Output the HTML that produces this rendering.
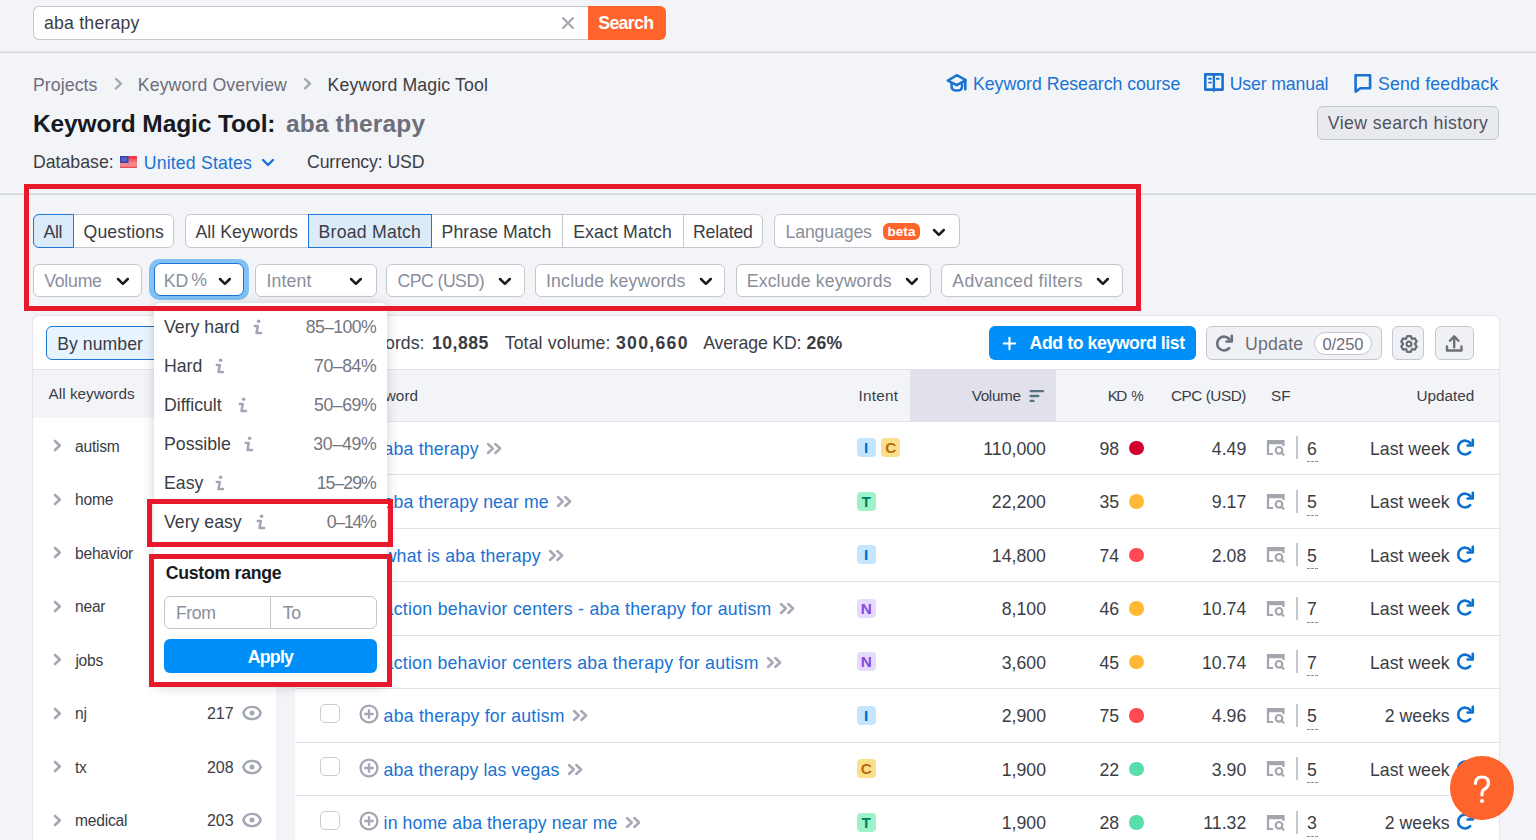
<!DOCTYPE html>
<html><head><meta charset="utf-8"><style>
html,body{margin:0;padding:0;}
body{width:1536px;height:840px;overflow:hidden;position:relative;background:#f3f4f8;font-family:"Liberation Sans",sans-serif;}
.a{position:absolute;}
.t{position:absolute;white-space:nowrap;line-height:1;}
</style></head><body>
<div class="a" style="left:33px;top:6px;width:555px;height:34px;background:#fff;border:1px solid #c4c7cf;border-right:none;border-radius:6px 0 0 6px;box-sizing:border-box;"></div>
<span class="t" style="left:44.00px;top:15.16px;font-size:17.7px;color:#3b3d45;letter-spacing:0.201px;">aba therapy</span>
<svg class="a" style="left:561px;top:16px;" width="14" height="14" viewBox="0 0 14 14"><path d="M2 2 L12 12 M12 2 L2 12" stroke="#a3a6ae" stroke-width="2" stroke-linecap="round"/></svg>
<div class="a" style="left:588px;top:6px;width:78px;height:34px;background:#ff642d;border-radius:0 6px 6px 0;"></div>
<span class="t" style="left:598.30px;top:15.16px;font-size:17.7px;color:#fff;font-weight:700;letter-spacing:-0.666px;">Search</span>
<div class="a" style="left:0px;top:51px;width:1536px;height:1px;background:#e4e5ea;"></div>
<div class="a" style="left:0px;top:52px;width:1536px;height:1px;background:#d4d6dc;"></div>
<span class="t" style="left:33.00px;top:77.16px;font-size:17.7px;color:#6c6e79;letter-spacing:0.067px;">Projects</span>
<svg class="a" style="left:113.409px;top:76.1px;" width="10.982" height="15.4" viewBox="0 0 10.982 15.4"><path d="M3 3 L7.982 7.7 L3 12.4" fill="none" stroke="#a3a6b3" stroke-width="2.4" stroke-linecap="round" stroke-linejoin="round"/></svg>
<span class="t" style="left:137.80px;top:77.16px;font-size:17.7px;color:#6c6e79;letter-spacing:0.107px;">Keyword Overview</span>
<svg class="a" style="left:302.209px;top:76.1px;" width="10.982" height="15.4" viewBox="0 0 10.982 15.4"><path d="M3 3 L7.982 7.7 L3 12.4" fill="none" stroke="#a3a6b3" stroke-width="2.4" stroke-linecap="round" stroke-linejoin="round"/></svg>
<span class="t" style="left:327.60px;top:77.16px;font-size:17.7px;color:#3b3d45;letter-spacing:0.138px;">Keyword Magic Tool</span>
<span class="t" style="left:973.00px;top:76.16px;font-size:17.7px;color:#1a72d2;letter-spacing:-0.008px;">Keyword Research course</span>
<span class="t" style="left:1229.70px;top:76.16px;font-size:17.7px;color:#1a72d2;letter-spacing:-0.144px;">User manual</span>
<span class="t" style="left:1378.00px;top:76.16px;font-size:17.7px;color:#1a72d2;letter-spacing:0.198px;">Send feedback</span>
<svg class="a" style="left:946px;top:73px;" width="22" height="20" viewBox="0 0 22 20"><path d="M1.8 7.6 L10.8 2.2 L19.8 7.2 L10.8 12.2 Z" fill="none" stroke="#1a72d2" stroke-width="2.5" stroke-linejoin="round"/><path d="M5.6 10.2 V13.8 Q5.6 17.6 10.8 17.6 Q16 17.6 16 13.8 V10.2" fill="none" stroke="#1a72d2" stroke-width="2.5"/><path d="M19.3 7.4 V16.3" stroke="#1a72d2" stroke-width="2.6" stroke-linecap="round"/></svg>
<svg class="a" style="left:1203px;top:72px;" width="22" height="22" viewBox="0 0 22 22"><path d="M2.3 2.4 H19.6 V17.6 H2.3 Z" fill="none" stroke="#1a72d2" stroke-width="2.6" stroke-linejoin="round"/><path d="M10.9 2.5 V18" stroke="#1a72d2" stroke-width="2.4"/><path d="M9.2 18 L10.9 20.6 L12.6 18 Z" fill="#1a72d2"/><path d="M6 6.8 H8 M6 10.6 H8 M13.8 6.8 H15.8" stroke="#1a72d2" stroke-width="1.9" stroke-linecap="round"/></svg>
<svg class="a" style="left:1353px;top:72px;" width="20" height="22" viewBox="0 0 20 22"><path d="M2.6 3.3 H17.1 V16.2 H7.4 L2.6 19.6 Z" fill="none" stroke="#1a72d2" stroke-width="2.6" stroke-linejoin="round"/></svg>
<div class="a" style="left:1317px;top:106px;width:181.5px;height:33.7px;background:#e9eaef;border:1px solid #c4c7cf;border-radius:6px;box-sizing:border-box;"></div>
<span class="t" style="left:1327.80px;top:115.16px;font-size:17.7px;color:#50535b;letter-spacing:0.392px;">View search history</span>
<span class="t" style="left:33.00px;top:112.26px;font-size:24.5px;color:#171a22;font-weight:700;letter-spacing:-0.114px;">Keyword Magic Tool:</span>
<span class="t" style="left:286.00px;top:112.26px;font-size:24.5px;color:#6c6e79;font-weight:700;letter-spacing:0.148px;">aba therapy</span>
<span class="t" style="left:33.00px;top:154.16px;font-size:17.7px;color:#3b3d45;">Database:</span>
<svg class="a" style="left:119.8px;top:155.7px;" width="17.2" height="12.8" viewBox="0 0 17.2 12.8"><rect x="0" y="0" width="17.2" height="12.8" rx="0.8" fill="#f2878b"/><rect x="0" y="0" width="17.2" height="3" fill="#f23c4c"/><rect x="0" y="3" width="17.2" height="2.5" fill="#f26068"/><rect x="0" y="10.8" width="17.2" height="2" fill="#e2505e"/><rect x="0" y="0" width="8.5" height="7" fill="#3a44a8"/><rect x="1.5" y="1.5" width="5.5" height="4" fill="#5a64c0"/></svg>
<span class="t" style="left:143.70px;top:155.16px;font-size:17.7px;color:#1a72d2;letter-spacing:0.171px;">United States</span>
<svg class="a" style="left:259.8px;top:157.05px;" width="16" height="10.9" viewBox="0 0 16 10.9"><path d="M3 3 L8.0 7.9 L13 3" fill="none" stroke="#1a72d2" stroke-width="2.4" stroke-linecap="round" stroke-linejoin="round"/></svg>
<span class="t" style="left:307.00px;top:154.16px;font-size:17.7px;color:#3b3d45;letter-spacing:-0.118px;">Currency: USD</span>
<div class="a" style="left:0px;top:193px;width:1536px;height:1px;background:#e2e4e9;"></div>
<div class="a" style="left:0px;top:194px;width:1536px;height:1px;background:#d1d4db;"></div>
<div class="a" style="left:33px;top:214.3px;width:141.4px;height:33.6px;background:#fff;border:1px solid #c4c7cf;border-radius:6px;box-sizing:border-box;"></div>
<div class="a" style="left:33px;top:214.3px;width:40.5px;height:33.6px;background:#dcebfa;border:1px solid #1f78d4;border-radius:6px 0 0 6px;box-sizing:border-box;"></div>
<span class="t" style="left:43.50px;top:224.16px;font-size:17.7px;color:#3b3d45;letter-spacing:-0.382px;">All</span>
<span class="t" style="left:83.60px;top:224.16px;font-size:17.7px;color:#3b3d45;letter-spacing:0.089px;">Questions</span>
<div class="a" style="left:185px;top:214.3px;width:578px;height:33.6px;background:#fff;border:1px solid #c4c7cf;border-radius:6px;box-sizing:border-box;"></div>
<div class="a" style="left:308px;top:214.3px;width:123.6px;height:33.6px;background:#dcebfa;border:1px solid #1f78d4;box-sizing:border-box;"></div>
<div class="a" style="left:562px;top:215.3px;width:1px;height:31.6px;background:#c4c7cf;"></div>
<div class="a" style="left:682.6px;top:215.3px;width:1px;height:31.6px;background:#c4c7cf;"></div>
<span class="t" style="left:195.50px;top:224.16px;font-size:17.7px;color:#3b3d45;letter-spacing:0.018px;">All Keywords</span>
<span class="t" style="left:318.60px;top:224.16px;font-size:17.7px;color:#3b3d45;letter-spacing:0.206px;">Broad Match</span>
<span class="t" style="left:441.60px;top:224.16px;font-size:17.7px;color:#3b3d45;letter-spacing:0.055px;">Phrase Match</span>
<span class="t" style="left:573.20px;top:224.16px;font-size:17.7px;color:#3b3d45;letter-spacing:0.131px;">Exact Match</span>
<span class="t" style="left:693.00px;top:224.16px;font-size:17.7px;color:#3b3d45;letter-spacing:-0.169px;">Related</span>
<div class="a" style="left:774.4px;top:214.3px;width:185.2px;height:33.6px;background:#fff;border:1px solid #c4c7cf;border-radius:6px;box-sizing:border-box;"></div>
<span class="t" style="left:785.50px;top:224.16px;font-size:17.7px;color:#8a8e9b;letter-spacing:-0.137px;">Languages</span>
<div class="a" style="left:883px;top:223.4px;width:37px;height:17px;background:#ff642d;border-radius:6px;"></div>
<span class="t" style="left:887.50px;top:224.76px;font-size:13.5px;color:#fff;font-weight:700;letter-spacing:0.050px;">beta</span>
<svg class="a" style="left:931.3000000000001px;top:226.599px;" width="15.8" height="10.802" viewBox="0 0 15.8 10.802"><path d="M3 3 L7.9 7.8020000000000005 L12.8 3" fill="none" stroke="#171a22" stroke-width="2.5" stroke-linecap="round" stroke-linejoin="round"/></svg>
<div class="a" style="left:33px;top:263.5px;width:109.19999999999999px;height:33px;background:#fff;border:1px solid #c4c7cf;border-radius:6px;box-sizing:border-box;"></div>
<span class="t" style="left:44.20px;top:273.16px;font-size:17.7px;color:#8a8e9b;letter-spacing:-0.246px;">Volume</span>
<svg class="a" style="left:114.89999999999999px;top:275.799px;" width="15.8" height="10.802" viewBox="0 0 15.8 10.802"><path d="M3 3 L7.9 7.8020000000000005 L12.8 3" fill="none" stroke="#171a22" stroke-width="2.5" stroke-linecap="round" stroke-linejoin="round"/></svg>
<div class="a" style="left:149.2px;top:258.9px;width:99.4px;height:41.4px;background:#80c2f6;border-radius:10px;"></div>
<div class="a" style="left:153.7px;top:262.8px;width:90.6px;height:33.6px;background:#fff;border:1.5px solid #1b74d6;border-radius:7px;box-sizing:border-box;"></div>
<span class="t" style="left:163.80px;top:273.16px;font-size:17.7px;color:#8a8e9b;">KD</span>
<span class="t" style="left:191.30px;top:272.16px;font-size:17.7px;color:#8a8e9b;">%</span>
<svg class="a" style="left:217.29999999999998px;top:275.799px;" width="15.8" height="10.802" viewBox="0 0 15.8 10.802"><path d="M3 3 L7.9 7.8020000000000005 L12.8 3" fill="none" stroke="#171a22" stroke-width="2.5" stroke-linecap="round" stroke-linejoin="round"/></svg>
<div class="a" style="left:255px;top:263.5px;width:121.5px;height:33px;background:#fff;border:1px solid #c4c7cf;border-radius:6px;box-sizing:border-box;"></div>
<span class="t" style="left:266.50px;top:273.16px;font-size:17.7px;color:#8a8e9b;letter-spacing:0.123px;">Intent</span>
<svg class="a" style="left:348.3px;top:275.799px;" width="15.8" height="10.802" viewBox="0 0 15.8 10.802"><path d="M3 3 L7.9 7.8020000000000005 L12.8 3" fill="none" stroke="#171a22" stroke-width="2.5" stroke-linecap="round" stroke-linejoin="round"/></svg>
<div class="a" style="left:386.3px;top:263.5px;width:139.09999999999997px;height:33px;background:#fff;border:1px solid #c4c7cf;border-radius:6px;box-sizing:border-box;"></div>
<span class="t" style="left:397.40px;top:273.16px;font-size:17.7px;color:#8a8e9b;letter-spacing:-0.532px;">CPC (USD)</span>
<svg class="a" style="left:497.1px;top:275.799px;" width="15.8" height="10.802" viewBox="0 0 15.8 10.802"><path d="M3 3 L7.9 7.8020000000000005 L12.8 3" fill="none" stroke="#171a22" stroke-width="2.5" stroke-linecap="round" stroke-linejoin="round"/></svg>
<div class="a" style="left:535px;top:263.5px;width:190.29999999999995px;height:33px;background:#fff;border:1px solid #c4c7cf;border-radius:6px;box-sizing:border-box;"></div>
<span class="t" style="left:546.00px;top:273.16px;font-size:17.7px;color:#8a8e9b;letter-spacing:0.183px;">Include keywords</span>
<svg class="a" style="left:697.7px;top:275.799px;" width="15.8" height="10.802" viewBox="0 0 15.8 10.802"><path d="M3 3 L7.9 7.8020000000000005 L12.8 3" fill="none" stroke="#171a22" stroke-width="2.5" stroke-linecap="round" stroke-linejoin="round"/></svg>
<div class="a" style="left:736.3px;top:263.5px;width:195.0px;height:33px;background:#fff;border:1px solid #c4c7cf;border-radius:6px;box-sizing:border-box;"></div>
<span class="t" style="left:746.70px;top:273.16px;font-size:17.7px;color:#8a8e9b;letter-spacing:0.150px;">Exclude keywords</span>
<svg class="a" style="left:903.6px;top:275.799px;" width="15.8" height="10.802" viewBox="0 0 15.8 10.802"><path d="M3 3 L7.9 7.8020000000000005 L12.8 3" fill="none" stroke="#171a22" stroke-width="2.5" stroke-linecap="round" stroke-linejoin="round"/></svg>
<div class="a" style="left:941.4px;top:263.5px;width:181.30000000000007px;height:33px;background:#fff;border:1px solid #c4c7cf;border-radius:6px;box-sizing:border-box;"></div>
<span class="t" style="left:952.30px;top:273.16px;font-size:17.7px;color:#8a8e9b;letter-spacing:0.291px;">Advanced filters</span>
<svg class="a" style="left:1094.8999999999999px;top:275.799px;" width="15.8" height="10.802" viewBox="0 0 15.8 10.802"><path d="M3 3 L7.9 7.8020000000000005 L12.8 3" fill="none" stroke="#171a22" stroke-width="2.5" stroke-linecap="round" stroke-linejoin="round"/></svg>
<div class="a" style="left:33px;top:316px;width:1466px;height:600px;background:#fff;border-radius:6px 6px 0 0;box-shadow:0 0 0 1px #e6e7ec;"></div>
<div class="a" style="left:33px;top:369px;width:1466px;height:1px;background:#e0e1e9;"></div>
<div class="a" style="left:46px;top:326px;width:200px;height:34px;background:#e7f3fe;border:1px solid #1f78d4;border-radius:6px;box-sizing:border-box;"></div>
<span class="t" style="left:57.20px;top:336.16px;font-size:17.7px;color:#3b3d45;letter-spacing:0.028px;">By number</span>
<span class="t" style="left:320.23px;top:335.16px;font-size:17.7px;color:#3b3d45;">All keywords:</span>
<span class="t" style="left:432.00px;top:335.16px;font-size:17.7px;color:#3b3d45;font-weight:700;letter-spacing:0.451px;">10,885</span>
<span class="t" style="left:504.70px;top:335.16px;font-size:17.7px;color:#3b3d45;letter-spacing:0.126px;">Total volume:</span>
<span class="t" style="left:616.00px;top:335.16px;font-size:17.7px;color:#3b3d45;font-weight:700;letter-spacing:1.269px;">300,660</span>
<span class="t" style="left:703.20px;top:335.16px;font-size:17.7px;color:#3b3d45;letter-spacing:-0.172px;">Average KD:</span>
<span class="t" style="left:806.40px;top:335.16px;font-size:17.7px;color:#3b3d45;font-weight:700;letter-spacing:0.191px;">26%</span>
<div class="a" style="left:989px;top:326.3px;width:207px;height:33.3px;background:#008ff8;border-radius:6px;"></div>
<svg class="a" style="left:1001.7px;top:335.5px;" width="15" height="15" viewBox="0 0 15 15"><path d="M7.5 1.8 V13.2 M1.8 7.5 H13.2" stroke="#fff" stroke-width="2.2" stroke-linecap="round"/></svg>
<span class="t" style="left:1029.60px;top:335.16px;font-size:17.7px;color:#fff;font-weight:700;letter-spacing:-0.425px;">Add to keyword list</span>
<div class="a" style="left:1206.2px;top:326.3px;width:175.5px;height:33.3px;background:#f0f1f5;border:1px solid #c4c7cf;border-radius:6px;box-sizing:border-box;"></div>
<svg class="a" style="left:1214px;top:333.8px;" width="20" height="20" viewBox="0 0 20 20"><path d="M15.2 14.2 A6.9 6.9 0 1 1 15.6 5.4" fill="none" stroke="#6c6e79" stroke-width="2.6" stroke-linecap="round"/><path d="M17.8 1.8 V7.5 H12.6" fill="none" stroke="#6c6e79" stroke-width="2.6" stroke-linecap="round" stroke-linejoin="round"/></svg>
<span class="t" style="left:1245.00px;top:336.16px;font-size:17.7px;color:#6c6e79;letter-spacing:0.223px;">Update</span>
<div class="a" style="left:1314px;top:331.5px;width:58px;height:23px;background:#fff;border:1px solid #c4c7cf;border-radius:12px;box-sizing:border-box;"></div>
<span class="t" style="left:1322.50px;top:335.76px;font-size:16.5px;color:#6c6e79;letter-spacing:-0.071px;">0/250</span>
<div class="a" style="left:1392px;top:326.3px;width:32.4px;height:33.3px;background:#f0f1f5;border:1px solid #c4c7cf;border-radius:6px;box-sizing:border-box;"></div>
<svg class="a" style="left:1398.5px;top:333.8px;" width="20" height="20" viewBox="0 0 20 20"><path d="M7.18 4.70 L8.18 2.11 L11.82 2.11 L12.82 4.70 L13.18 4.91 L15.92 4.48 L17.75 7.63 L16.00 9.79 L16.00 10.21 L17.75 12.37 L15.92 15.52 L13.18 15.09 L12.82 15.30 L11.82 17.89 L8.18 17.89 L7.18 15.30 L6.82 15.09 L4.08 15.52 L2.25 12.37 L4.00 10.21 L4.00 9.79 L2.25 7.63 L4.08 4.48 L6.82 4.91 Z" fill="none" stroke="#6c6e79" stroke-width="2.3" stroke-linejoin="round"/><circle cx="10" cy="10" r="2.4" fill="none" stroke="#6c6e79" stroke-width="2.2"/></svg>
<div class="a" style="left:1435px;top:326.3px;width:39.4px;height:33.3px;background:#f0f1f5;border:1px solid #c4c7cf;border-radius:6px;box-sizing:border-box;"></div>
<svg class="a" style="left:1444px;top:333px;" width="20" height="20" viewBox="0 0 20 20"><path d="M10.2 14.3 V3.5 M6 7.8 L10.2 3.3 L14.4 7.8" fill="none" stroke="#6c6e79" stroke-width="2.4" stroke-linecap="round" stroke-linejoin="round"/><path d="M3 13.5 V17.5 H17.5 V13.5" fill="none" stroke="#6c6e79" stroke-width="2.4" stroke-linecap="round" stroke-linejoin="round"/></svg>
<div class="a" style="left:33px;top:370px;width:243.4px;height:48px;background:#f3f4f8;"></div>
<span class="t" style="left:48.60px;top:385.86px;font-size:15.3px;color:#3b3d45;letter-spacing:0.011px;">All keywords</span>
<div class="a" style="left:276.4px;top:316px;width:19px;height:600px;background:#f3f4f8;"></div>
<svg class="a" style="left:52.015px;top:438.4px;" width="10.77" height="15" viewBox="0 0 10.77 15"><path d="M3 3 L7.7700000000000005 7.5 L3 12" fill="none" stroke="#a3a6b3" stroke-width="2.6" stroke-linecap="round" stroke-linejoin="round"/></svg>
<span class="t" style="left:75.00px;top:438.71px;font-size:15.6px;color:#3b3d45;letter-spacing:-0.220px;">autism</span>
<svg class="a" style="left:52.015px;top:491.9px;" width="10.77" height="15" viewBox="0 0 10.77 15"><path d="M3 3 L7.7700000000000005 7.5 L3 12" fill="none" stroke="#a3a6b3" stroke-width="2.6" stroke-linecap="round" stroke-linejoin="round"/></svg>
<span class="t" style="left:75.00px;top:491.71px;font-size:15.6px;color:#3b3d45;letter-spacing:-0.220px;">home</span>
<svg class="a" style="left:52.015px;top:545.4000000000001px;" width="10.77" height="15" viewBox="0 0 10.77 15"><path d="M3 3 L7.7700000000000005 7.5 L3 12" fill="none" stroke="#a3a6b3" stroke-width="2.6" stroke-linecap="round" stroke-linejoin="round"/></svg>
<span class="t" style="left:75.00px;top:545.71px;font-size:15.6px;color:#3b3d45;letter-spacing:-0.220px;">behavior</span>
<svg class="a" style="left:52.015px;top:598.9000000000001px;" width="10.77" height="15" viewBox="0 0 10.77 15"><path d="M3 3 L7.7700000000000005 7.5 L3 12" fill="none" stroke="#a3a6b3" stroke-width="2.6" stroke-linecap="round" stroke-linejoin="round"/></svg>
<span class="t" style="left:75.00px;top:598.71px;font-size:15.6px;color:#3b3d45;letter-spacing:-0.220px;">near</span>
<svg class="a" style="left:52.015px;top:652.4000000000001px;" width="10.77" height="15" viewBox="0 0 10.77 15"><path d="M3 3 L7.7700000000000005 7.5 L3 12" fill="none" stroke="#a3a6b3" stroke-width="2.6" stroke-linecap="round" stroke-linejoin="round"/></svg>
<span class="t" style="left:75.39px;top:652.71px;font-size:15.6px;color:#3b3d45;letter-spacing:-0.220px;">jobs</span>
<svg class="a" style="left:52.015px;top:705.9000000000001px;" width="10.77" height="15" viewBox="0 0 10.77 15"><path d="M3 3 L7.7700000000000005 7.5 L3 12" fill="none" stroke="#a3a6b3" stroke-width="2.6" stroke-linecap="round" stroke-linejoin="round"/></svg>
<span class="t" style="left:75.00px;top:705.71px;font-size:15.6px;color:#3b3d45;letter-spacing:-0.220px;">nj</span>
<span class="t" style="left:206.91px;top:705.51px;font-size:16px;color:#3b3d45;">217</span>
<svg class="a" style="left:241.1px;top:705.35px;" width="22" height="16" viewBox="0 0 22 16"><path d="M2.3 8 C5 -0.2 17 -0.2 19.7 8 C17 16.2 5 16.2 2.3 8 Z" fill="none" stroke="#a3a6b3" stroke-width="2.4" stroke-linejoin="round"/><circle cx="11" cy="8" r="2.5" fill="#a3a6b3"/></svg>
<svg class="a" style="left:52.015px;top:759.4000000000001px;" width="10.77" height="15" viewBox="0 0 10.77 15"><path d="M3 3 L7.7700000000000005 7.5 L3 12" fill="none" stroke="#a3a6b3" stroke-width="2.6" stroke-linecap="round" stroke-linejoin="round"/></svg>
<span class="t" style="left:75.00px;top:759.71px;font-size:15.6px;color:#3b3d45;letter-spacing:-0.220px;">tx</span>
<span class="t" style="left:206.91px;top:759.51px;font-size:16px;color:#3b3d45;">208</span>
<svg class="a" style="left:241.1px;top:758.85px;" width="22" height="16" viewBox="0 0 22 16"><path d="M2.3 8 C5 -0.2 17 -0.2 19.7 8 C17 16.2 5 16.2 2.3 8 Z" fill="none" stroke="#a3a6b3" stroke-width="2.4" stroke-linejoin="round"/><circle cx="11" cy="8" r="2.5" fill="#a3a6b3"/></svg>
<svg class="a" style="left:52.015px;top:812.9000000000001px;" width="10.77" height="15" viewBox="0 0 10.77 15"><path d="M3 3 L7.7700000000000005 7.5 L3 12" fill="none" stroke="#a3a6b3" stroke-width="2.6" stroke-linecap="round" stroke-linejoin="round"/></svg>
<span class="t" style="left:75.00px;top:812.71px;font-size:15.6px;color:#3b3d45;letter-spacing:-0.220px;">medical</span>
<span class="t" style="left:206.91px;top:812.51px;font-size:16px;color:#3b3d45;">203</span>
<svg class="a" style="left:241.1px;top:812.35px;" width="22" height="16" viewBox="0 0 22 16"><path d="M2.3 8 C5 -0.2 17 -0.2 19.7 8 C17 16.2 5 16.2 2.3 8 Z" fill="none" stroke="#a3a6b3" stroke-width="2.4" stroke-linejoin="round"/><circle cx="11" cy="8" r="2.5" fill="#a3a6b3"/></svg>
<div class="a" style="left:295.2px;top:370px;width:1203.8px;height:50.5px;background:#f3f4f8;"></div>
<div class="a" style="left:910.2px;top:370px;width:145.6px;height:50.5px;background:#e0e1ea;"></div>
<div class="a" style="left:295.2px;top:420.5px;width:1203.8px;height:1px;background:#e0e1e9;"></div>
<span class="t" style="left:358.47px;top:387.86px;font-size:15.3px;color:#3b3d45;">Keyword</span>
<span class="t" style="left:858.60px;top:387.86px;font-size:15.3px;color:#3b3d45;letter-spacing:0.204px;">Intent</span>
<span class="t" style="left:971.70px;top:387.86px;font-size:15.3px;color:#3b3d45;letter-spacing:-0.345px;">Volume</span>
<svg class="a" style="left:1028px;top:388px;" width="18" height="16" viewBox="0 0 18 16"><path d="M2.6 3.1 H15 M2.6 8 H10.3 M2.6 12.9 H5.5" stroke="#587280" stroke-width="2.3" stroke-linecap="round"/></svg>
<span class="t" style="left:1107.80px;top:387.86px;font-size:15.3px;color:#3b3d45;letter-spacing:-1.752px;">KD</span>
<span class="t" style="left:1131.15px;top:389.01px;font-size:14px;color:#3b3d45;">%</span>
<span class="t" style="left:1171.00px;top:387.86px;font-size:15.3px;color:#3b3d45;letter-spacing:-0.457px;">CPC (USD)</span>
<span class="t" style="left:1271.00px;top:387.86px;font-size:15.3px;color:#3b3d45;">SF</span>
<span class="t" style="left:1416.55px;top:387.86px;font-size:15.3px;color:#3b3d45;">Updated</span>
<div class="a" style="left:320.2px;top:436.0px;width:19.4px;height:19.2px;background:#fff;border:1.2px solid #c9ccd4;border-radius:5px;box-sizing:border-box;"></div>
<svg class="a" style="left:358.8px;top:436.8px;" width="20" height="20" viewBox="0 0 20 20"><circle cx="10" cy="10" r="8.4" fill="none" stroke="#a3a6b3" stroke-width="2.3"/><path d="M10 5.3 V14.7 M5.3 10 H14.7" stroke="#a3a6b3" stroke-width="2.3"/></svg>
<span class="t" style="left:383.60px;top:441.16px;font-size:17.7px;color:#1a72d2;letter-spacing:0.161px;">aba therapy</span>
<svg class="a" style="left:486.2px;top:441.5px;" width="17" height="15" viewBox="0 0 17 15"><path d="M2 2 L6.8 6.5 L2 11 M9.3 2 L14.1 6.5 L9.3 11" fill="none" stroke="#a6a9b5" stroke-width="2.5" stroke-linecap="round" stroke-linejoin="round"/></svg>
<div class="a" style="left:856.6px;top:438.2px;width:19.3px;height:19.1px;background:#c4e5fe;border-radius:4px;"></div>
<span class="t" style="left:864.12px;top:439.86px;font-size:15.3px;color:#006dca;font-weight:700;">I</span>
<div class="a" style="left:881.0px;top:438.2px;width:19.3px;height:19.1px;background:#fcdf8a;border-radius:4px;"></div>
<span class="t" style="left:885.13px;top:439.86px;font-size:15.3px;color:#b56b0b;font-weight:700;">C</span>
<span class="t" style="left:983.32px;top:441.16px;font-size:17.7px;color:#3b3d45;">110,000</span>
<span class="t" style="left:1099.42px;top:441.16px;font-size:17.7px;color:#3b3d45;">98</span>
<div class="a" style="left:1129.2px;top:440.55px;width:14.5px;height:14.5px;background:#d1002f;border-radius:50%;"></div>
<span class="t" style="left:1211.86px;top:441.16px;font-size:17.7px;color:#3b3d45;">4.49</span>
<svg class="a" style="left:1265.5px;top:439.3px;" width="20" height="17" viewBox="0 0 20 17"><path d="M17.5 7 V2 H2 V15 H7" fill="none" stroke="#a3a6ae" stroke-width="2.2"/><path d="M2 4 H17.5" stroke="#a3a6ae" stroke-width="2.5"/><circle cx="13" cy="11.3" r="3.3" fill="none" stroke="#a3a6ae" stroke-width="2.2"/><path d="M15.5 13.8 L17.5 15.8" stroke="#a3a6ae" stroke-width="2.2" stroke-linecap="round"/></svg>
<div class="a" style="left:1296.3px;top:436.3px;width:1.5px;height:23px;background:#c4c7cf;"></div>
<span class="t" style="left:1307.00px;top:441.16px;font-size:17.7px;color:#3b3d45;">6</span>
<div class="a" style="left:1307px;top:461.3px;width:10.5px;height:1px;background:none;border-top:1px dashed #8a8e9b;"></div>
<span class="t" style="left:1369.98px;top:441.16px;font-size:17.7px;color:#3b3d45;">Last week</span>
<svg class="a" style="left:1454.5px;top:437.8px;" width="20" height="20" viewBox="0 0 20 20"><path d="M15.2 14.2 A6.9 6.9 0 1 1 15.6 5.4" fill="none" stroke="#0a6fd0" stroke-width="2.6" stroke-linecap="round"/><path d="M17.8 1.8 V7.5 H12.6" fill="none" stroke="#0a6fd0" stroke-width="2.6" stroke-linecap="round" stroke-linejoin="round"/></svg>
<div class="a" style="left:295.2px;top:474.0px;width:1203.8px;height:1px;background:#e0e1e9;"></div>
<div class="a" style="left:320.2px;top:489.5px;width:19.4px;height:19.2px;background:#fff;border:1.2px solid #c9ccd4;border-radius:5px;box-sizing:border-box;"></div>
<svg class="a" style="left:358.8px;top:490.3px;" width="20" height="20" viewBox="0 0 20 20"><circle cx="10" cy="10" r="8.4" fill="none" stroke="#a3a6b3" stroke-width="2.3"/><path d="M10 5.3 V14.7 M5.3 10 H14.7" stroke="#a3a6b3" stroke-width="2.3"/></svg>
<span class="t" style="left:383.60px;top:494.16px;font-size:17.7px;color:#1a72d2;letter-spacing:0.104px;">aba therapy near me</span>
<svg class="a" style="left:556.3px;top:495.0px;" width="17" height="15" viewBox="0 0 17 15"><path d="M2 2 L6.8 6.5 L2 11 M9.3 2 L14.1 6.5 L9.3 11" fill="none" stroke="#a6a9b5" stroke-width="2.5" stroke-linecap="round" stroke-linejoin="round"/></svg>
<div class="a" style="left:856.6px;top:491.7px;width:19.3px;height:19.1px;background:#9ef2c9;border-radius:4px;"></div>
<span class="t" style="left:861.58px;top:493.86px;font-size:15.3px;color:#007c65;font-weight:700;">T</span>
<span class="t" style="left:991.86px;top:494.16px;font-size:17.7px;color:#3b3d45;">22,200</span>
<span class="t" style="left:1099.42px;top:494.16px;font-size:17.7px;color:#3b3d45;">35</span>
<div class="a" style="left:1129.2px;top:494.05px;width:14.5px;height:14.5px;background:#ffb937;border-radius:50%;"></div>
<span class="t" style="left:1211.86px;top:494.16px;font-size:17.7px;color:#3b3d45;">9.17</span>
<svg class="a" style="left:1265.5px;top:492.8px;" width="20" height="17" viewBox="0 0 20 17"><path d="M17.5 7 V2 H2 V15 H7" fill="none" stroke="#a3a6ae" stroke-width="2.2"/><path d="M2 4 H17.5" stroke="#a3a6ae" stroke-width="2.5"/><circle cx="13" cy="11.3" r="3.3" fill="none" stroke="#a3a6ae" stroke-width="2.2"/><path d="M15.5 13.8 L17.5 15.8" stroke="#a3a6ae" stroke-width="2.2" stroke-linecap="round"/></svg>
<div class="a" style="left:1296.3px;top:489.8px;width:1.5px;height:23px;background:#c4c7cf;"></div>
<span class="t" style="left:1307.00px;top:494.16px;font-size:17.7px;color:#3b3d45;">5</span>
<div class="a" style="left:1307px;top:514.8px;width:10.5px;height:1px;background:none;border-top:1px dashed #8a8e9b;"></div>
<span class="t" style="left:1369.98px;top:494.16px;font-size:17.7px;color:#3b3d45;">Last week</span>
<svg class="a" style="left:1454.5px;top:491.3px;" width="20" height="20" viewBox="0 0 20 20"><path d="M15.2 14.2 A6.9 6.9 0 1 1 15.6 5.4" fill="none" stroke="#0a6fd0" stroke-width="2.6" stroke-linecap="round"/><path d="M17.8 1.8 V7.5 H12.6" fill="none" stroke="#0a6fd0" stroke-width="2.6" stroke-linecap="round" stroke-linejoin="round"/></svg>
<div class="a" style="left:295.2px;top:527.5px;width:1203.8px;height:1px;background:#e0e1e9;"></div>
<div class="a" style="left:320.2px;top:543.0px;width:19.4px;height:19.2px;background:#fff;border:1.2px solid #c9ccd4;border-radius:5px;box-sizing:border-box;"></div>
<svg class="a" style="left:358.8px;top:543.8px;" width="20" height="20" viewBox="0 0 20 20"><circle cx="10" cy="10" r="8.4" fill="none" stroke="#a3a6b3" stroke-width="2.3"/><path d="M10 5.3 V14.7 M5.3 10 H14.7" stroke="#a3a6b3" stroke-width="2.3"/></svg>
<span class="t" style="left:383.64px;top:548.16px;font-size:17.7px;color:#1a72d2;letter-spacing:0.198px;">what is aba therapy</span>
<svg class="a" style="left:548.2px;top:548.5px;" width="17" height="15" viewBox="0 0 17 15"><path d="M2 2 L6.8 6.5 L2 11 M9.3 2 L14.1 6.5 L9.3 11" fill="none" stroke="#a6a9b5" stroke-width="2.5" stroke-linecap="round" stroke-linejoin="round"/></svg>
<div class="a" style="left:856.6px;top:545.1999999999999px;width:19.3px;height:19.1px;background:#c4e5fe;border-radius:4px;"></div>
<span class="t" style="left:864.12px;top:546.86px;font-size:15.3px;color:#006dca;font-weight:700;">I</span>
<span class="t" style="left:991.86px;top:548.16px;font-size:17.7px;color:#3b3d45;">14,800</span>
<span class="t" style="left:1099.42px;top:548.16px;font-size:17.7px;color:#3b3d45;">74</span>
<div class="a" style="left:1129.2px;top:547.55px;width:14.5px;height:14.5px;background:#ff4953;border-radius:50%;"></div>
<span class="t" style="left:1211.86px;top:548.16px;font-size:17.7px;color:#3b3d45;">2.08</span>
<svg class="a" style="left:1265.5px;top:546.3px;" width="20" height="17" viewBox="0 0 20 17"><path d="M17.5 7 V2 H2 V15 H7" fill="none" stroke="#a3a6ae" stroke-width="2.2"/><path d="M2 4 H17.5" stroke="#a3a6ae" stroke-width="2.5"/><circle cx="13" cy="11.3" r="3.3" fill="none" stroke="#a3a6ae" stroke-width="2.2"/><path d="M15.5 13.8 L17.5 15.8" stroke="#a3a6ae" stroke-width="2.2" stroke-linecap="round"/></svg>
<div class="a" style="left:1296.3px;top:543.3px;width:1.5px;height:23px;background:#c4c7cf;"></div>
<span class="t" style="left:1307.00px;top:548.16px;font-size:17.7px;color:#3b3d45;">5</span>
<div class="a" style="left:1307px;top:568.3px;width:10.5px;height:1px;background:none;border-top:1px dashed #8a8e9b;"></div>
<span class="t" style="left:1369.98px;top:548.16px;font-size:17.7px;color:#3b3d45;">Last week</span>
<svg class="a" style="left:1454.5px;top:544.8px;" width="20" height="20" viewBox="0 0 20 20"><path d="M15.2 14.2 A6.9 6.9 0 1 1 15.6 5.4" fill="none" stroke="#0a6fd0" stroke-width="2.6" stroke-linecap="round"/><path d="M17.8 1.8 V7.5 H12.6" fill="none" stroke="#0a6fd0" stroke-width="2.6" stroke-linecap="round" stroke-linejoin="round"/></svg>
<div class="a" style="left:295.2px;top:581.0px;width:1203.8px;height:1px;background:#e0e1e9;"></div>
<div class="a" style="left:320.2px;top:596.5px;width:19.4px;height:19.2px;background:#fff;border:1.2px solid #c9ccd4;border-radius:5px;box-sizing:border-box;"></div>
<svg class="a" style="left:358.8px;top:597.3px;" width="20" height="20" viewBox="0 0 20 20"><circle cx="10" cy="10" r="8.4" fill="none" stroke="#a3a6b3" stroke-width="2.3"/><path d="M10 5.3 V14.7 M5.3 10 H14.7" stroke="#a3a6b3" stroke-width="2.3"/></svg>
<span class="t" style="left:383.60px;top:601.16px;font-size:17.7px;color:#1a72d2;letter-spacing:0.278px;">action behavior centers - aba therapy for autism</span>
<svg class="a" style="left:779.0px;top:602.0px;" width="17" height="15" viewBox="0 0 17 15"><path d="M2 2 L6.8 6.5 L2 11 M9.3 2 L14.1 6.5 L9.3 11" fill="none" stroke="#a6a9b5" stroke-width="2.5" stroke-linecap="round" stroke-linejoin="round"/></svg>
<div class="a" style="left:856.6px;top:598.6999999999999px;width:19.3px;height:19.1px;background:#e6dbfc;border-radius:4px;"></div>
<span class="t" style="left:860.73px;top:600.86px;font-size:15.3px;color:#8649e1;font-weight:700;">N</span>
<span class="t" style="left:1001.71px;top:601.16px;font-size:17.7px;color:#3b3d45;">8,100</span>
<span class="t" style="left:1099.42px;top:601.16px;font-size:17.7px;color:#3b3d45;">46</span>
<div class="a" style="left:1129.2px;top:601.05px;width:14.5px;height:14.5px;background:#ffb937;border-radius:50%;"></div>
<span class="t" style="left:1202.01px;top:601.16px;font-size:17.7px;color:#3b3d45;">10.74</span>
<svg class="a" style="left:1265.5px;top:599.8px;" width="20" height="17" viewBox="0 0 20 17"><path d="M17.5 7 V2 H2 V15 H7" fill="none" stroke="#a3a6ae" stroke-width="2.2"/><path d="M2 4 H17.5" stroke="#a3a6ae" stroke-width="2.5"/><circle cx="13" cy="11.3" r="3.3" fill="none" stroke="#a3a6ae" stroke-width="2.2"/><path d="M15.5 13.8 L17.5 15.8" stroke="#a3a6ae" stroke-width="2.2" stroke-linecap="round"/></svg>
<div class="a" style="left:1296.3px;top:596.8px;width:1.5px;height:23px;background:#c4c7cf;"></div>
<span class="t" style="left:1307.00px;top:601.16px;font-size:17.7px;color:#3b3d45;">7</span>
<div class="a" style="left:1307px;top:621.8px;width:10.5px;height:1px;background:none;border-top:1px dashed #8a8e9b;"></div>
<span class="t" style="left:1369.98px;top:601.16px;font-size:17.7px;color:#3b3d45;">Last week</span>
<svg class="a" style="left:1454.5px;top:598.3px;" width="20" height="20" viewBox="0 0 20 20"><path d="M15.2 14.2 A6.9 6.9 0 1 1 15.6 5.4" fill="none" stroke="#0a6fd0" stroke-width="2.6" stroke-linecap="round"/><path d="M17.8 1.8 V7.5 H12.6" fill="none" stroke="#0a6fd0" stroke-width="2.6" stroke-linecap="round" stroke-linejoin="round"/></svg>
<div class="a" style="left:295.2px;top:634.5px;width:1203.8px;height:1px;background:#e0e1e9;"></div>
<div class="a" style="left:320.2px;top:650.0px;width:19.4px;height:19.2px;background:#fff;border:1.2px solid #c9ccd4;border-radius:5px;box-sizing:border-box;"></div>
<svg class="a" style="left:358.8px;top:650.8px;" width="20" height="20" viewBox="0 0 20 20"><circle cx="10" cy="10" r="8.4" fill="none" stroke="#a3a6b3" stroke-width="2.3"/><path d="M10 5.3 V14.7 M5.3 10 H14.7" stroke="#a3a6b3" stroke-width="2.3"/></svg>
<span class="t" style="left:383.60px;top:655.16px;font-size:17.7px;color:#1a72d2;letter-spacing:0.246px;">action behavior centers aba therapy for autism</span>
<svg class="a" style="left:766.2px;top:655.5px;" width="17" height="15" viewBox="0 0 17 15"><path d="M2 2 L6.8 6.5 L2 11 M9.3 2 L14.1 6.5 L9.3 11" fill="none" stroke="#a6a9b5" stroke-width="2.5" stroke-linecap="round" stroke-linejoin="round"/></svg>
<div class="a" style="left:856.6px;top:652.1999999999999px;width:19.3px;height:19.1px;background:#e6dbfc;border-radius:4px;"></div>
<span class="t" style="left:860.73px;top:653.86px;font-size:15.3px;color:#8649e1;font-weight:700;">N</span>
<span class="t" style="left:1001.71px;top:655.16px;font-size:17.7px;color:#3b3d45;">3,600</span>
<span class="t" style="left:1099.42px;top:655.16px;font-size:17.7px;color:#3b3d45;">45</span>
<div class="a" style="left:1129.2px;top:654.55px;width:14.5px;height:14.5px;background:#ffb937;border-radius:50%;"></div>
<span class="t" style="left:1202.01px;top:655.16px;font-size:17.7px;color:#3b3d45;">10.74</span>
<svg class="a" style="left:1265.5px;top:653.3px;" width="20" height="17" viewBox="0 0 20 17"><path d="M17.5 7 V2 H2 V15 H7" fill="none" stroke="#a3a6ae" stroke-width="2.2"/><path d="M2 4 H17.5" stroke="#a3a6ae" stroke-width="2.5"/><circle cx="13" cy="11.3" r="3.3" fill="none" stroke="#a3a6ae" stroke-width="2.2"/><path d="M15.5 13.8 L17.5 15.8" stroke="#a3a6ae" stroke-width="2.2" stroke-linecap="round"/></svg>
<div class="a" style="left:1296.3px;top:650.3px;width:1.5px;height:23px;background:#c4c7cf;"></div>
<span class="t" style="left:1307.00px;top:655.16px;font-size:17.7px;color:#3b3d45;">7</span>
<div class="a" style="left:1307px;top:675.3px;width:10.5px;height:1px;background:none;border-top:1px dashed #8a8e9b;"></div>
<span class="t" style="left:1369.98px;top:655.16px;font-size:17.7px;color:#3b3d45;">Last week</span>
<svg class="a" style="left:1454.5px;top:651.8px;" width="20" height="20" viewBox="0 0 20 20"><path d="M15.2 14.2 A6.9 6.9 0 1 1 15.6 5.4" fill="none" stroke="#0a6fd0" stroke-width="2.6" stroke-linecap="round"/><path d="M17.8 1.8 V7.5 H12.6" fill="none" stroke="#0a6fd0" stroke-width="2.6" stroke-linecap="round" stroke-linejoin="round"/></svg>
<div class="a" style="left:295.2px;top:688.0px;width:1203.8px;height:1px;background:#e0e1e9;"></div>
<div class="a" style="left:320.2px;top:703.5px;width:19.4px;height:19.2px;background:#fff;border:1.2px solid #c9ccd4;border-radius:5px;box-sizing:border-box;"></div>
<svg class="a" style="left:358.8px;top:704.3px;" width="20" height="20" viewBox="0 0 20 20"><circle cx="10" cy="10" r="8.4" fill="none" stroke="#a3a6b3" stroke-width="2.3"/><path d="M10 5.3 V14.7 M5.3 10 H14.7" stroke="#a3a6b3" stroke-width="2.3"/></svg>
<span class="t" style="left:383.60px;top:708.16px;font-size:17.7px;color:#1a72d2;letter-spacing:0.233px;">aba therapy for autism</span>
<svg class="a" style="left:572.1px;top:709.0px;" width="17" height="15" viewBox="0 0 17 15"><path d="M2 2 L6.8 6.5 L2 11 M9.3 2 L14.1 6.5 L9.3 11" fill="none" stroke="#a6a9b5" stroke-width="2.5" stroke-linecap="round" stroke-linejoin="round"/></svg>
<div class="a" style="left:856.6px;top:705.6999999999999px;width:19.3px;height:19.1px;background:#c4e5fe;border-radius:4px;"></div>
<span class="t" style="left:864.12px;top:707.86px;font-size:15.3px;color:#006dca;font-weight:700;">I</span>
<span class="t" style="left:1001.71px;top:708.16px;font-size:17.7px;color:#3b3d45;">2,900</span>
<span class="t" style="left:1099.42px;top:708.16px;font-size:17.7px;color:#3b3d45;">75</span>
<div class="a" style="left:1129.2px;top:708.05px;width:14.5px;height:14.5px;background:#ff4953;border-radius:50%;"></div>
<span class="t" style="left:1211.86px;top:708.16px;font-size:17.7px;color:#3b3d45;">4.96</span>
<svg class="a" style="left:1265.5px;top:706.8px;" width="20" height="17" viewBox="0 0 20 17"><path d="M17.5 7 V2 H2 V15 H7" fill="none" stroke="#a3a6ae" stroke-width="2.2"/><path d="M2 4 H17.5" stroke="#a3a6ae" stroke-width="2.5"/><circle cx="13" cy="11.3" r="3.3" fill="none" stroke="#a3a6ae" stroke-width="2.2"/><path d="M15.5 13.8 L17.5 15.8" stroke="#a3a6ae" stroke-width="2.2" stroke-linecap="round"/></svg>
<div class="a" style="left:1296.3px;top:703.8px;width:1.5px;height:23px;background:#c4c7cf;"></div>
<span class="t" style="left:1307.00px;top:708.16px;font-size:17.7px;color:#3b3d45;">5</span>
<div class="a" style="left:1307px;top:728.8px;width:10.5px;height:1px;background:none;border-top:1px dashed #8a8e9b;"></div>
<span class="t" style="left:1384.78px;top:708.16px;font-size:17.7px;color:#3b3d45;">2 weeks</span>
<svg class="a" style="left:1454.5px;top:705.3px;" width="20" height="20" viewBox="0 0 20 20"><path d="M15.2 14.2 A6.9 6.9 0 1 1 15.6 5.4" fill="none" stroke="#0a6fd0" stroke-width="2.6" stroke-linecap="round"/><path d="M17.8 1.8 V7.5 H12.6" fill="none" stroke="#0a6fd0" stroke-width="2.6" stroke-linecap="round" stroke-linejoin="round"/></svg>
<div class="a" style="left:295.2px;top:741.5px;width:1203.8px;height:1px;background:#e0e1e9;"></div>
<div class="a" style="left:320.2px;top:757.0px;width:19.4px;height:19.2px;background:#fff;border:1.2px solid #c9ccd4;border-radius:5px;box-sizing:border-box;"></div>
<svg class="a" style="left:358.8px;top:757.8px;" width="20" height="20" viewBox="0 0 20 20"><circle cx="10" cy="10" r="8.4" fill="none" stroke="#a3a6b3" stroke-width="2.3"/><path d="M10 5.3 V14.7 M5.3 10 H14.7" stroke="#a3a6b3" stroke-width="2.3"/></svg>
<span class="t" style="left:383.60px;top:762.16px;font-size:17.7px;color:#1a72d2;letter-spacing:0.131px;">aba therapy las vegas</span>
<svg class="a" style="left:566.9px;top:762.5px;" width="17" height="15" viewBox="0 0 17 15"><path d="M2 2 L6.8 6.5 L2 11 M9.3 2 L14.1 6.5 L9.3 11" fill="none" stroke="#a6a9b5" stroke-width="2.5" stroke-linecap="round" stroke-linejoin="round"/></svg>
<div class="a" style="left:856.6px;top:759.1999999999999px;width:19.3px;height:19.1px;background:#fcdf8a;border-radius:4px;"></div>
<span class="t" style="left:860.73px;top:760.86px;font-size:15.3px;color:#b56b0b;font-weight:700;">C</span>
<span class="t" style="left:1001.71px;top:762.16px;font-size:17.7px;color:#3b3d45;">1,900</span>
<span class="t" style="left:1099.42px;top:762.16px;font-size:17.7px;color:#3b3d45;">22</span>
<div class="a" style="left:1129.2px;top:761.55px;width:14.5px;height:14.5px;background:#59ddaa;border-radius:50%;"></div>
<span class="t" style="left:1211.86px;top:762.16px;font-size:17.7px;color:#3b3d45;">3.90</span>
<svg class="a" style="left:1265.5px;top:760.3px;" width="20" height="17" viewBox="0 0 20 17"><path d="M17.5 7 V2 H2 V15 H7" fill="none" stroke="#a3a6ae" stroke-width="2.2"/><path d="M2 4 H17.5" stroke="#a3a6ae" stroke-width="2.5"/><circle cx="13" cy="11.3" r="3.3" fill="none" stroke="#a3a6ae" stroke-width="2.2"/><path d="M15.5 13.8 L17.5 15.8" stroke="#a3a6ae" stroke-width="2.2" stroke-linecap="round"/></svg>
<div class="a" style="left:1296.3px;top:757.3px;width:1.5px;height:23px;background:#c4c7cf;"></div>
<span class="t" style="left:1307.00px;top:762.16px;font-size:17.7px;color:#3b3d45;">5</span>
<div class="a" style="left:1307px;top:782.3px;width:10.5px;height:1px;background:none;border-top:1px dashed #8a8e9b;"></div>
<span class="t" style="left:1369.98px;top:762.16px;font-size:17.7px;color:#3b3d45;">Last week</span>
<svg class="a" style="left:1454.5px;top:758.8px;" width="20" height="20" viewBox="0 0 20 20"><path d="M15.2 14.2 A6.9 6.9 0 1 1 15.6 5.4" fill="none" stroke="#0a6fd0" stroke-width="2.6" stroke-linecap="round"/><path d="M17.8 1.8 V7.5 H12.6" fill="none" stroke="#0a6fd0" stroke-width="2.6" stroke-linecap="round" stroke-linejoin="round"/></svg>
<div class="a" style="left:295.2px;top:795.0px;width:1203.8px;height:1px;background:#e0e1e9;"></div>
<div class="a" style="left:320.2px;top:810.5px;width:19.4px;height:19.2px;background:#fff;border:1.2px solid #c9ccd4;border-radius:5px;box-sizing:border-box;"></div>
<svg class="a" style="left:358.8px;top:811.3px;" width="20" height="20" viewBox="0 0 20 20"><circle cx="10" cy="10" r="8.4" fill="none" stroke="#a3a6b3" stroke-width="2.3"/><path d="M10 5.3 V14.7 M5.3 10 H14.7" stroke="#a3a6b3" stroke-width="2.3"/></svg>
<span class="t" style="left:383.60px;top:815.16px;font-size:17.7px;color:#1a72d2;letter-spacing:0.103px;">in home aba therapy near me</span>
<svg class="a" style="left:625.0px;top:816.0px;" width="17" height="15" viewBox="0 0 17 15"><path d="M2 2 L6.8 6.5 L2 11 M9.3 2 L14.1 6.5 L9.3 11" fill="none" stroke="#a6a9b5" stroke-width="2.5" stroke-linecap="round" stroke-linejoin="round"/></svg>
<div class="a" style="left:856.6px;top:812.6999999999999px;width:19.3px;height:19.1px;background:#9ef2c9;border-radius:4px;"></div>
<span class="t" style="left:861.58px;top:814.86px;font-size:15.3px;color:#007c65;font-weight:700;">T</span>
<span class="t" style="left:1001.71px;top:815.16px;font-size:17.7px;color:#3b3d45;">1,900</span>
<span class="t" style="left:1099.42px;top:815.16px;font-size:17.7px;color:#3b3d45;">28</span>
<div class="a" style="left:1129.2px;top:815.05px;width:14.5px;height:14.5px;background:#59ddaa;border-radius:50%;"></div>
<span class="t" style="left:1203.32px;top:815.16px;font-size:17.7px;color:#3b3d45;">11.32</span>
<svg class="a" style="left:1265.5px;top:813.8px;" width="20" height="17" viewBox="0 0 20 17"><path d="M17.5 7 V2 H2 V15 H7" fill="none" stroke="#a3a6ae" stroke-width="2.2"/><path d="M2 4 H17.5" stroke="#a3a6ae" stroke-width="2.5"/><circle cx="13" cy="11.3" r="3.3" fill="none" stroke="#a3a6ae" stroke-width="2.2"/><path d="M15.5 13.8 L17.5 15.8" stroke="#a3a6ae" stroke-width="2.2" stroke-linecap="round"/></svg>
<div class="a" style="left:1296.3px;top:810.8px;width:1.5px;height:23px;background:#c4c7cf;"></div>
<span class="t" style="left:1307.00px;top:815.16px;font-size:17.7px;color:#3b3d45;">3</span>
<div class="a" style="left:1307px;top:835.8px;width:10.5px;height:1px;background:none;border-top:1px dashed #8a8e9b;"></div>
<span class="t" style="left:1384.78px;top:815.16px;font-size:17.7px;color:#3b3d45;">2 weeks</span>
<svg class="a" style="left:1454.5px;top:812.3px;" width="20" height="20" viewBox="0 0 20 20"><path d="M15.2 14.2 A6.9 6.9 0 1 1 15.6 5.4" fill="none" stroke="#0a6fd0" stroke-width="2.6" stroke-linecap="round"/><path d="M17.8 1.8 V7.5 H12.6" fill="none" stroke="#0a6fd0" stroke-width="2.6" stroke-linecap="round" stroke-linejoin="round"/></svg>
<div class="a" style="left:154px;top:303px;width:233.2px;height:383px;background:#fff;border-radius:6px;box-shadow:0 1px 12px rgba(0,0,0,0.18);"></div>
<span class="t" style="left:164.00px;top:319.16px;font-size:17.7px;color:#3b3d45;">Very hard</span>
<svg class="a" style="left:252px;top:317px;" width="12" height="20" viewBox="0 0 12 20"><circle cx="6.6" cy="4.3" r="1.8" fill="#a3a6b4"/><path d="M2.8 9 H5.8 L4.5 16 H9" fill="none" stroke="#a3a6b4" stroke-width="2.5" stroke-linecap="round" stroke-linejoin="round"/></svg>
<span class="t" style="left:305.70px;top:319.16px;font-size:17.7px;color:#74767f;letter-spacing:-0.617px;">85–100%</span>
<span class="t" style="left:164.00px;top:358.16px;font-size:17.7px;color:#3b3d45;">Hard</span>
<svg class="a" style="left:213.8px;top:356px;" width="12" height="20" viewBox="0 0 12 20"><circle cx="6.6" cy="4.3" r="1.8" fill="#a3a6b4"/><path d="M2.8 9 H5.8 L4.5 16 H9" fill="none" stroke="#a3a6b4" stroke-width="2.5" stroke-linecap="round" stroke-linejoin="round"/></svg>
<span class="t" style="left:314.00px;top:358.16px;font-size:17.7px;color:#74767f;letter-spacing:-0.432px;">70–84%</span>
<span class="t" style="left:164.00px;top:397.16px;font-size:17.7px;color:#3b3d45;">Difficult</span>
<svg class="a" style="left:237px;top:395px;" width="12" height="20" viewBox="0 0 12 20"><circle cx="6.6" cy="4.3" r="1.8" fill="#a3a6b4"/><path d="M2.8 9 H5.8 L4.5 16 H9" fill="none" stroke="#a3a6b4" stroke-width="2.5" stroke-linecap="round" stroke-linejoin="round"/></svg>
<span class="t" style="left:314.00px;top:397.16px;font-size:17.7px;color:#74767f;letter-spacing:-0.432px;">50–69%</span>
<span class="t" style="left:164.00px;top:436.16px;font-size:17.7px;color:#3b3d45;">Possible</span>
<svg class="a" style="left:243px;top:434px;" width="12" height="20" viewBox="0 0 12 20"><circle cx="6.6" cy="4.3" r="1.8" fill="#a3a6b4"/><path d="M2.8 9 H5.8 L4.5 16 H9" fill="none" stroke="#a3a6b4" stroke-width="2.5" stroke-linecap="round" stroke-linejoin="round"/></svg>
<span class="t" style="left:313.30px;top:436.16px;font-size:17.7px;color:#74767f;letter-spacing:-0.292px;">30–49%</span>
<span class="t" style="left:164.00px;top:475.16px;font-size:17.7px;color:#3b3d45;">Easy</span>
<svg class="a" style="left:214px;top:473px;" width="12" height="20" viewBox="0 0 12 20"><circle cx="6.6" cy="4.3" r="1.8" fill="#a3a6b4"/><path d="M2.8 9 H5.8 L4.5 16 H9" fill="none" stroke="#a3a6b4" stroke-width="2.5" stroke-linecap="round" stroke-linejoin="round"/></svg>
<span class="t" style="left:316.70px;top:475.16px;font-size:17.7px;color:#74767f;letter-spacing:-0.972px;">15–29%</span>
<span class="t" style="left:164.00px;top:514.16px;font-size:17.7px;color:#3b3d45;">Very easy</span>
<svg class="a" style="left:254.7px;top:512px;" width="12" height="20" viewBox="0 0 12 20"><circle cx="6.6" cy="4.3" r="1.8" fill="#a3a6b4"/><path d="M2.8 9 H5.8 L4.5 16 H9" fill="none" stroke="#a3a6b4" stroke-width="2.5" stroke-linecap="round" stroke-linejoin="round"/></svg>
<span class="t" style="left:326.80px;top:514.16px;font-size:17.7px;color:#74767f;letter-spacing:-1.279px;">0–14%</span>
<span class="t" style="left:165.70px;top:565.16px;font-size:17.7px;color:#171a22;font-weight:700;letter-spacing:-0.272px;">Custom range</span>
<div class="a" style="left:164.3px;top:596px;width:212.4px;height:33.3px;background:#fff;border:1px solid #c4c7cf;border-radius:6px;box-sizing:border-box;"></div>
<div class="a" style="left:269.5px;top:597px;width:1px;height:31.3px;background:#c4c7cf;"></div>
<span class="t" style="left:176.00px;top:605.16px;font-size:17.7px;color:#8a8e9b;letter-spacing:-0.431px;">From</span>
<span class="t" style="left:282.70px;top:605.16px;font-size:17.7px;color:#8a8e9b;letter-spacing:-0.391px;">To</span>
<div class="a" style="left:164.3px;top:639.3px;width:212.4px;height:34px;background:#008ff8;border-radius:6px;"></div>
<span class="t" style="left:247.70px;top:649.16px;font-size:17.7px;color:#fff;font-weight:700;letter-spacing:-0.718px;">Apply</span>
<div class="a" style="left:24px;top:184px;width:1117px;height:127px;border:5px solid #e8192b;box-sizing:border-box;"></div>
<div class="a" style="left:147px;top:499px;width:246.3px;height:48px;border:5px solid #e8192b;box-sizing:border-box;"></div>
<div class="a" style="left:149px;top:554px;width:242.7px;height:132.7px;border:5px solid #e8192b;box-sizing:border-box;"></div>
<div class="a" style="left:1450.4px;top:756.2px;width:63.4px;height:63.4px;background:#ff642d;border-radius:50%;"></div>
<svg class="a" style="left:1468px;top:772.5px;" width="28" height="36" viewBox="0 0 28 36"><path d="M7.5 10.5 Q7.5 4 14 4 Q20.5 4 20.5 10 Q20.5 14 16 16.5 Q14 17.8 14 21 V22" fill="none" stroke="#fff" stroke-width="3.2" stroke-linecap="round"/><circle cx="14" cy="28" r="2.1" fill="#fff"/></svg>
</body></html>
